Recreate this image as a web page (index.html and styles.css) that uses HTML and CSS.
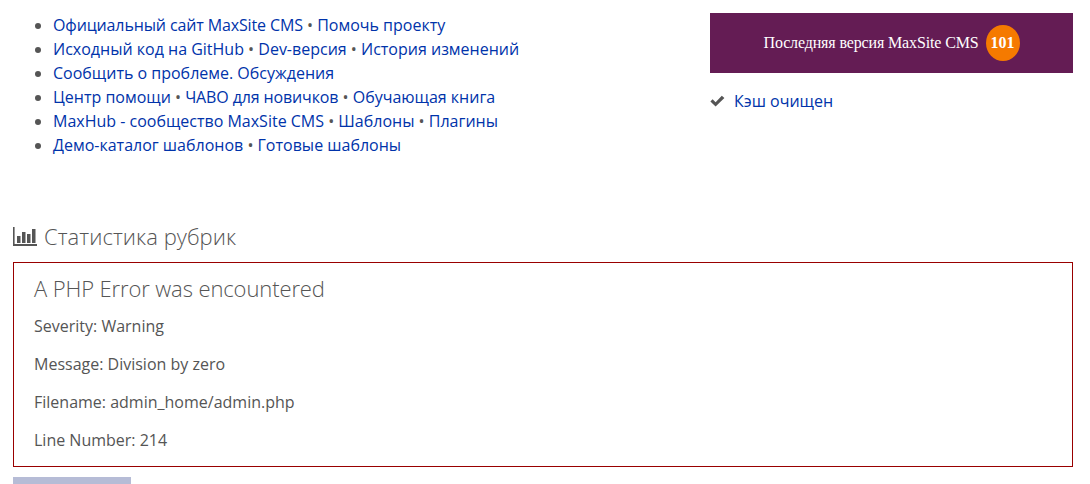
FILE: index.html
```html
<!DOCTYPE html>
<html lang="en">
<head>
    <meta charset="UTF-8">
    <title>MaxSite CMS</title>
    <link rel="stylesheet" href="styles.css">
</head>
<body>
    <div class="top">
        <ul class="links">
            <li><a href="#" class="tight">Официальный сайт MaxSite CMS</a> • <a href="#">Помочь проекту</a></li>
            <li><a href="#">Исходный код на GitHub</a> • <a href="#">Dev-версия</a> • <a href="#">История изменений</a></li>
            <li><a href="#">Сообщить о проблеме. Обсуждения</a></li>
            <li><a href="#">Центр помощи</a> • <a href="#" class="tight">ЧАВО для новичков</a> • <a href="#">Обучающая книга</a></li>
            <li><a href="#">MaxHub - сообщество MaxSite CMS</a> • <a href="#">Шаблоны</a> • <a href="#">Плагины</a></li>
            <li><a href="#">Демо-каталог шаблонов</a> • <a href="#">Готовые шаблоны</a></li>
        </ul>
        <div class="side">
            <div class="version">
                <span class="version_text">Последняя версия MaxSite CMS</span>
                <span class="badge">101</span>
            </div>
            <p class="cache">
                <svg class="check" viewBox="0 0 15 12" width="15" height="12"><path d="M0.4 6.4 L2.6 4.2 L5.6 7.2 L11.8 0.8 L14.4 3 L5.6 11.6 Z" fill="#555"/></svg>
                <a href="#">Кэш очищен</a>
            </p>
        </div>
    </div>
    <h2 class="stat">
        <svg class="chart" viewBox="0 0 24 19" width="24" height="19">
            <path d="M0 0 H1.6 V17 H24 V19 H0 Z" fill="#555"/>
            <path d="M4 9 H7.5 V16 H4 Z M9 5 H12.5 V16 H9 Z M14 7 H17.5 V16 H14 Z M19 2 H22.5 V16 H19 Z" fill="#555"/>
        </svg>
        Статистика рубрик
    </h2>
    <div class="error">
        <h4>A PHP Error was encountered</h4>
        <p>Severity: Warning</p>
        <p>Message: Division by zero</p>
        <p>Filename: admin_home/admin.php</p>
        <p>Line Number: 214</p>
    </div>
    <div class="bar"></div>
</body>
</html>
```

FILE: styles.css
```css
html, body
{
    overflow: hidden;
}
body
{
    margin: 0;
    padding: 13px 17px 0 13px;
    height: 484px;
    box-sizing: border-box;
    font-family: "Open Sans", "Noto Sans", sans-serif;
    font-size: 16px;
    line-height: 24px;
    color: #555555;
    background: #ffffff;
}
a
{
    color: #0033aa;
    text-decoration: none;
}
.tight
{
    letter-spacing: -0.13px;
}
.top
{
    display: flex;
    justify-content: space-between;
    height: 200px;
}
.links
{
    margin: 0;
    padding: 0 0 0 40px;
}
.side
{
    width: 363px;
}
.version
{
    display: flex;
    align-items: center;
    justify-content: center;
    gap: 7px;
    height: 60px;
    background: #641c54;
    color: #ffffff;
    font-family: "Liberation Serif", serif;
    font-size: 16px;
}
.version_text
{
    letter-spacing: -0.14px;
}
.badge
{
    display: flex;
    align-items: center;
    justify-content: center;
    width: 34px;
    height: 36px;
    border-radius: 50%;
    background: #f57a00;
    font-weight: bold;
    font-size: 16px;
}
.cache
{
    display: flex;
    align-items: center;
    gap: 9px;
    margin: 16px 0 0 0;
}
.stat
{
    display: flex;
    align-items: center;
    gap: 7px;
    margin: 10px 0 12px 0;
    height: 27px;
    font-size: 22px;
    line-height: 27px;
    font-weight: 300;
    letter-spacing: 0.05px;
}
.error
{
    box-sizing: border-box;
    height: 205px;
    padding: 10px 20px;
    border: 1px solid #990000;
}
.error h4
{
    margin: 0 0 11px 0;
    font-size: 22px;
    line-height: 30px;
    font-weight: 300;
    letter-spacing: -0.11px;
}
.error p
{
    margin: 0 0 14px 0;
}
.bar
{
    width: 118px;
    height: 7px;
    margin-top: 10px;
    background: #b6bcd6;
}
```
